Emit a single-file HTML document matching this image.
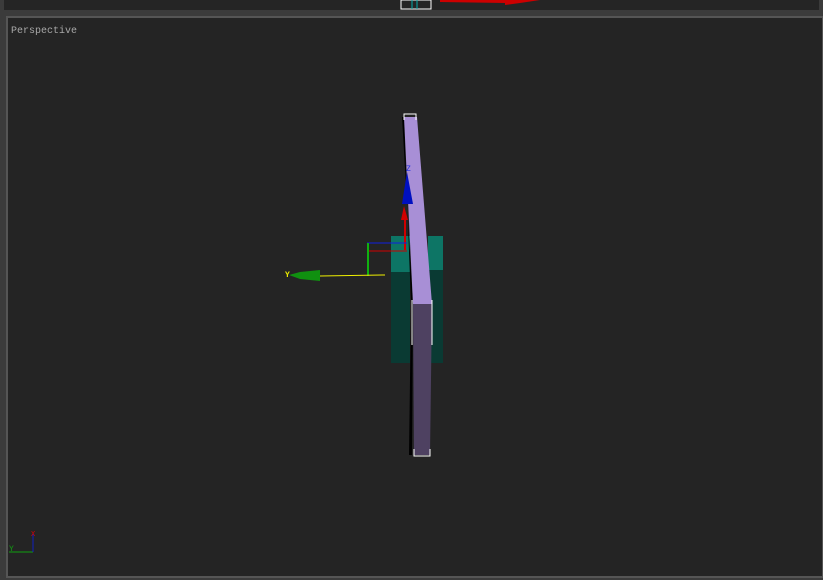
<!DOCTYPE html>
<html><head><style>
html,body{margin:0;padding:0;background:#3a3a3a;width:823px;height:580px;overflow:hidden}
</style></head><body>
<svg width="823" height="580" xmlns="http://www.w3.org/2000/svg" style="display:block">
<rect width="823" height="580" fill="#3b3b3b"/>
<rect x="4" y="0" width="815" height="10" fill="#252525"/>
<rect x="401" y="0" width="30" height="9" fill="none" stroke="#fff" stroke-width="1"/>
<line x1="412" y1="0" x2="412" y2="9" stroke="#0aa" />
<line x1="417" y1="0" x2="417" y2="9" stroke="#0aa" />
<polygon points="440,0 540,0 520,3 505,5 505,3 440,2" fill="#c00"/>
<rect x="6" y="16" width="817" height="562" fill="#555"/>
<rect x="8" y="18" width="814" height="558" fill="#242424"/>
<text x="11" y="33" font-family="Liberation Mono, monospace" font-size="10" fill="#a8a8a8">Perspective</text>
<rect x="391" y="236" width="19" height="36" fill="#0d7565"/>
<rect x="391" y="272" width="19" height="91" fill="#0a3a33"/>
<rect x="428" y="236" width="15" height="34" fill="#0d7565"/>
<rect x="428" y="270" width="15" height="93" fill="#0a3a33"/>
<polygon points="402,117 404,117 411,304 409,455 412,455 413,304" fill="#000"/>
<polygon points="404,117 417,117 432,304 413,304" fill="#a88fd6"/>
<polygon points="413,304 432,304 430,455 414,455" fill="#4e4161"/>
<polyline points="404,120 404,114 416,114 416,120" fill="none" stroke="#fff"/>
<polyline points="414,449 414,456 430,456 430,449" fill="none" stroke="#fff"/>
<line x1="412" y1="300" x2="412" y2="345" stroke="#fff"/>
<line x1="432" y1="300" x2="432" y2="345" stroke="#fff"/>
<polygon points="407,172 402,204 413,204" fill="#0010c0"/>
<text x="406" y="171" font-family="Liberation Mono, monospace" font-size="8" fill="#2030e0">Z</text>
<polygon points="404,206 401,220 408,220" fill="#d00000"/>
<line x1="405" y1="218" x2="405" y2="250" stroke="#d00000" stroke-width="2"/>
<line x1="367" y1="243" x2="407" y2="243" stroke="#1020e0"/>
<line x1="367" y1="251" x2="407" y2="251" stroke="#d00000"/>
<line x1="368" y1="243" x2="368" y2="276" stroke="#10b010" stroke-width="2"/>
<line x1="320" y1="276" x2="385" y2="275" stroke="#f0f000"/>
<polygon points="289,275 300,272 320,270 320,281 300,279" fill="#109010"/>
<text x="285" y="277" font-family="Liberation Mono, monospace" font-size="8" fill="#f0f000" font-weight="bold">Y</text>
<line x1="9" y1="552" x2="33" y2="552" stroke="#10a010"/>
<line x1="33" y1="534" x2="33" y2="552" stroke="#1020c0"/>
<text x="31" y="536" font-family="Liberation Mono, monospace" font-size="7" fill="#d00">X</text>
<text x="9" y="551" font-family="Liberation Mono, monospace" font-size="8" fill="#10a010">Y</text>
</svg>
</body></html>
